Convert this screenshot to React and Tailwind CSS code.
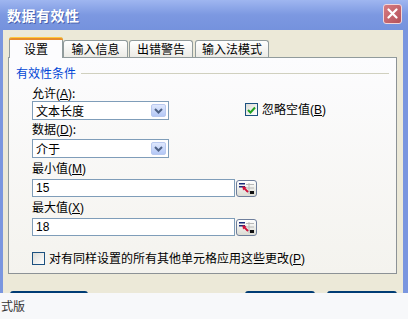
import React from 'react'

function DropArrow() {
  return (
    <div className="absolute right-[2px] top-[2px] bottom-[2px] w-[15px] rounded-[2px] border border-[#b9c9ef] bg-gradient-to-b from-[#dfe8fd] to-[#b4c8f6] flex items-center justify-center">
      <svg width="9" height="6" viewBox="0 0 9 6">
        <path d="M1 1 L4.5 4.5 L8 1" fill="none" stroke="#4d6185" strokeWidth="2" />
      </svg>
    </div>
  )
}

function Select({ value }) {
  return (
    <div className="relative w-[137px] h-[19px] border border-[#7f9db9] bg-white pl-[3px] flex items-center">
      <span className="leading-[14px]">{value}</span>
      <DropArrow />
    </div>
  )
}

function RefButton() {
  return (
    <div className="w-[21px] h-[17px] rounded-[3px] border border-[#6f7f9c] bg-gradient-to-b from-[#ffffff] to-[#dcdcd4] flex items-center justify-center">
      <svg width="15" height="11" viewBox="0 0 15 11">
        <rect x="0" y="0" width="6" height="1.5" fill="#1a2a7a" />
        <rect x="0" y="3" width="6" height="1.5" fill="#1a2a7a" />
        <path d="M7 1.5 H15 M7 5 H15 M7 8.5 H12 M10 0 V11" stroke="#b8b8b8" strokeWidth="1" fill="none" />
        <path d="M4 4 L9 9" stroke="#d0103a" strokeWidth="1.8" />
        <path d="M3.5 3.5 L7.5 4 L4 7.5 Z" fill="#d0103a" />
        <rect x="11" y="8" width="4" height="3" fill="#111" />
      </svg>
    </div>
  )
}

function RefInput({ value }) {
  return (
    <div className="flex items-center gap-[1px]">
      <div className="w-[203px] h-[18px] border border-[#7f9db9] bg-white pl-[3px] flex items-center">
        <span className="leading-[14px] font-['Liberation_Sans',sans-serif]">{value}</span>
      </div>
      <RefButton />
    </div>
  )
}

function Label({ children, className = '' }) {
  return <div className={`h-[14px] leading-[14px] ${className}`}>{children}</div>
}

function Acc({ k }) {
  return (
    <span className="font-['Liberation_Sans',sans-serif]">
      (<span className="underline">{k}</span>)
    </span>
  )
}

function Tab({ label, active, className = '' }) {
  if (active) {
    return (
      <div className={`relative z-10 -mb-px h-[21px] w-[54px] rounded-t-[3px] border-x border-[#919b9c] bg-[#fcfcfe] flex items-center justify-center ${className}`}>
        <div className="absolute left-[-1px] right-[-1px] top-0 h-[3px] rounded-t-[3px] bg-[#e68b2c] border-t border-[#ffc83c]" />
        <span className="mt-[2px] leading-[14px]">{label}</span>
      </div>
    )
  }
  return (
    <div className={`h-[17px] rounded-t-[3px] border border-b-0 border-[#919b9c] bg-gradient-to-b from-[#ffffff] to-[#ecebe6] flex items-center justify-center ${className}`}>
      <span className="leading-[14px]">{label}</span>
    </div>
  )
}

export default function App() {
  return (
    <div className="w-[408px] h-[319px] overflow-hidden bg-[#f7f8fa] text-[12px] text-black font-['Noto_Sans_CJK_SC','Noto_Sans',sans-serif]">
      {/* Window */}
      <div className="h-[293px] flex flex-col bg-[#7a96df] overflow-hidden">
        {/* Title bar */}
        <div className="h-[30px] shrink-0 flex items-center justify-between pl-[7px] pr-[6px] bg-gradient-to-b from-[#9fb6f0] via-[#7c98e1] to-[#7592dd]">
          <span className="text-white font-bold text-[14px] leading-[16px] tracking-[0.5px] [text-shadow:1px_1px_0_#4a63b0]">数据有效性</span>
          <div className="w-[19px] h-[20px] mb-[3px] rounded-[3px] border border-[#f2d6da] bg-gradient-to-br from-[#d77b82] to-[#b4515a] flex items-center justify-center">
            <svg width="11" height="11" viewBox="0 0 11 11">
              <path d="M1.5 1.5 L9.5 9.5 M9.5 1.5 L1.5 9.5" stroke="#fff" strokeWidth="2.2" strokeLinecap="round" />
            </svg>
          </div>
        </div>
        {/* Body */}
        <div className="flex-1 min-h-0 ml-[3px] mr-[5px] bg-[#ece9d8] flex flex-col overflow-hidden">
          {/* Tabs */}
          <div className="shrink-0 mt-[6px] ml-[6px] h-[21px] flex items-end">
            <Tab label="设置" active />
            <Tab label="输入信息" className="w-[65px]" />
            <Tab label="出错警告" className="w-[64px] ml-[1px]" />
            <Tab label="输入法模式" className="w-[74px] ml-[2px]" />
          </div>
          {/* Panel */}
          <div className="shrink-0 ml-[5px] w-[389px] h-[217px] border border-[#919b9c] border-r-[#8c9296] border-b-[#8c9296] bg-gradient-to-b from-[#fcfcfe] to-[#f4f3ee] flex flex-col">
            <div className="mt-[8px] ml-[7px] mr-[7px] h-[14px] flex items-center gap-[5px]">
              <span className="text-[#0046d5] leading-[14px]">有效性条件</span>
              <div className="flex-1 border-t border-[#d0d0bf]" />
            </div>
            <div className="pl-[23px] flex flex-col">
              <Label className="mt-[6px]">允许<Acc k="A" />:</Label>
              <div className="mt-[1px] flex items-start">
                <Select value="文本长度" />
                <div className="ml-[76px] mt-[1px] flex items-center gap-[4px]">
                  <div className="w-[13px] h-[13px] border border-[#1c5180] bg-gradient-to-br from-[#dcdcd7] to-[#ffffff] flex items-center justify-center">
                    <svg width="9" height="8" viewBox="0 0 9 8">
                      <path d="M1 4 L3.5 6.5 L8 1.5" fill="none" stroke="#21a121" strokeWidth="2" />
                    </svg>
                  </div>
                  <span className="leading-[14px]">忽略空值<Acc k="B" /></span>
                </div>
              </div>
              <Label className="mt-[2px]">数据<Acc k="D" />:</Label>
              <div className="mt-[3px]">
                <Select value="介于" />
              </div>
              <Label className="mt-[3px]">最小值<Acc k="M" /></Label>
              <div className="mt-[4px]">
                <RefInput value="15" />
              </div>
              <Label className="mt-[3px]">最大值<Acc k="X" /></Label>
              <div className="mt-[4px]">
                <RefInput value="18" />
              </div>
              <div className="mt-[15px] flex items-center gap-[4px]">
                <div className="w-[13px] h-[13px] border border-[#1c5180] bg-gradient-to-br from-[#dcdcd7] to-[#ffffff]" />
                <span className="leading-[14px]">对有同样设置的所有其他单元格应用这些更改<Acc k="P" /></span>
              </div>
            </div>
          </div>
          {/* Buttons (cut off) */}
          <div className="shrink-0 mt-[17px] flex">
            <div className="ml-[7px] w-[78px] h-[20px] rounded-t-[3px] border-t-2 border-x border-[#003c74] bg-[#f4f4f0]" />
            <div className="ml-[157px] w-[70px] h-[20px] rounded-t-[3px] border-t-2 border-x border-[#003c74] bg-[#f4f4f0]" />
            <div className="ml-[12px] w-[70px] h-[20px] rounded-t-[3px] border-t-2 border-x border-[#003c74] bg-[#f4f4f0]" />
          </div>
        </div>
      </div>
      {/* Page below */}
      <div className="h-[26px] flex items-center">
        <span className="ml-[1px] text-[#333] leading-[14px]">式版</span>
      </div>
    </div>
  )
}
